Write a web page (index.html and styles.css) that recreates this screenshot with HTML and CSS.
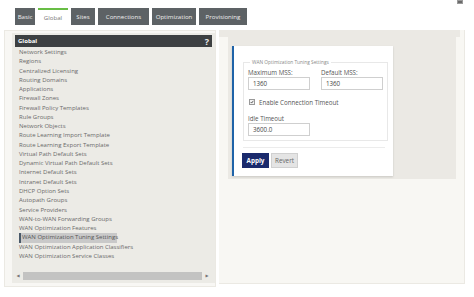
FILE: index.html
```html
<!DOCTYPE html>
<html>
<head>
<meta charset="utf-8">
<link rel="stylesheet" href="styles.css">
</head>
<body>
<div class="corner-icon"></div>
<div class="tabs">
  <div class="tab">Basic</div>
  <div class="tab active">Global</div>
  <div class="tab">Sites</div>
  <div class="tab">Connections</div>
  <div class="tab">Optimization</div>
  <div class="tab">Provisioning</div>
</div>
<div class="main">
  <div class="left">
    <div class="left-inner">
      <div class="left-head"><span>Global</span><span class="help">?</span></div>
      <ul class="nav">
        <li>Network Settings</li>
        <li>Regions</li>
        <li>Centralized Licensing</li>
        <li>Routing Domains</li>
        <li>Applications</li>
        <li>Firewall Zones</li>
        <li>Firewall Policy Templates</li>
        <li>Rule Groups</li>
        <li>Network Objects</li>
        <li>Route Learning Import Template</li>
        <li>Route Learning Export Template</li>
        <li>Virtual Path Default Sets</li>
        <li>Dynamic Virtual Path Default Sets</li>
        <li>Internet Default Sets</li>
        <li>Intranet Default Sets</li>
        <li>DHCP Option Sets</li>
        <li>Autopath Groups</li>
        <li>Service Providers</li>
        <li>WAN-to-WAN Forwarding Groups</li>
        <li>WAN Optimization Features</li>
        <li class="sel">WAN Optimization Tuning Settings</li>
        <li>WAN Optimization Application Classifiers</li>
        <li>WAN Optimization Service Classes</li>
      </ul>
      <div class="hscroll">
        <span class="arr">&#9664;</span>
        <div class="track"></div>
        <span class="arr">&#9654;</span>
      </div>
    </div>
  </div>
  <div class="right">
    <div class="right-top"></div>
    <div class="card-area">
      <div class="card">
        <fieldset class="fs">
          <legend>WAN Optimization Tuning Settings</legend>
          <div class="row">
            <div class="field">
              <label>Maximum MSS:</label>
              <div class="input">1360</div>
            </div>
            <div class="field">
              <label>Default MSS:</label>
              <div class="input">1360</div>
            </div>
          </div>
          <div class="check"><span class="cb"><svg width="6" height="6" viewBox="0 0 6 6"><path d="M1 3 L2.5 4.6 L5 1.2" fill="none" stroke="#333" stroke-width="1.1"/></svg></span>Enable Connection Timeout</div>
          <div class="field">
            <label>Idle Timeout</label>
            <div class="input">3600.0</div>
          </div>
        </fieldset>
        <div class="sep"></div>
        <div class="buttons">
          <div class="btn apply">Apply</div>
          <div class="btn revert">Revert</div>
        </div>
      </div>
    </div>
  </div>
</div>
</body>
</html>
```

FILE: styles.css
```css
* { box-sizing: border-box; }
html, body { margin: 0; padding: 0; background: #ffffff; }
body {
  font-family: "Open Sans", "DejaVu Sans", sans-serif;
  font-size: 6px;
  color: #666;
  width: 474px;
  height: 297px;
  overflow: hidden;
  position: relative;
}
.corner-icon {
  position: absolute;
  left: 457px;
  top: 0;
  width: 6px;
  height: 4px;
  background: #6a6a6a;
  border: 1px solid #999;
}
.tabs {
  display: flex;
  gap: 3px;
  margin: 8px 0 0 15px;
  height: 17px;
}
.tab {
  background: #5d6265;
  color: #eeeeee;
  font-size: 6.1px;
  display: flex;
  align-items: center;
  justify-content: center;
  height: 17px;
}
.tab:nth-child(1) { width: 20px; }
.tab:nth-child(2) { width: 30px; }
.tab:nth-child(3) { width: 24px; }
.tab:nth-child(4) { width: 51px; }
.tab:nth-child(5) { width: 44px; }
.tab:nth-child(6) { width: 48px; }
.tab.active {
  background: #ffffff;
  color: #777;
  border-top: 2px solid #68bd45;
}
.main {
  display: flex;
  margin-top: 5px;
}
.left {
  margin-left: 4px;
  width: 212px;
  height: 257px;
  background: #f8f7f4;
  border: 1px solid #ebe9e3;
  padding: 2px 0 3px 7px;
}
.left-inner {
  background: #ecebe6;
  height: 100%;
  padding: 2px 3px 0 3px;
  display: flex;
  flex-direction: column;
}
.left-head {
  background: #3d4042;
  color: #fff;
  font-weight: bold;
  height: 12px;
  display: flex;
  align-items: center;
  justify-content: space-between;
  padding: 0 3px 0 3px;
  font-size: 6px;
}
.help { font-size: 9px; font-weight: bold; color: #eee; }
.nav {
  list-style: none;
  margin: 1px 0 0 0;
  padding: 0;
}
.nav li {
  height: 9.27px;
  line-height: 9.27px;
  padding-left: 4px;
  color: #6a6a6a;
  white-space: nowrap;
}
.nav li.sel {
  background: #c9c9c9;
  border-left: 2px solid #4a5a6a;
  margin-left: 4px;
  padding-left: 1px;
  width: 98px;
  color: #555;
}
.hscroll {
  margin-top: 10px;
  display: flex;
  align-items: center;
  height: 9px;
  gap: 2px;
}
.hscroll .arr { font-size: 4px; color: #777; width: 6px; text-align: center; }
.hscroll .track { flex: 0 0 179px; height: 8px; background: #c3c3c2; }
.right {
  margin-left: 3px;
  width: 246px;
  height: 254px;
  background: #f8f7f3;
  border-right: 1px solid #ebe9e3;
  border-bottom: 1px solid #ebe9e3;
}
.right-top {
  height: 7px;
  background: #ebe9e4;
  width: 241px;
}
.card-area {
  margin-left: 9px;
  width: 228px;
  height: 142px;
  background: #ebe9e4;
  padding-top: 9px;
  padding-left: 4px;
}
.card {
  width: 161px;
  height: 130px;
  background: #ffffff;
  border-left: 2px solid #1f63a8;
  box-shadow: 0 1px 2px rgba(0,0,0,0.15);
  padding: 13px 8px 0 9px;
}
.fs {
  margin: 0;
  border: 1px solid #e8e8e8;
  padding: 4px 4px 4px 4px;
}
.fs legend {
  font-size: 4.8px;
  color: #888;
  padding: 0 2px;
  margin-left: 2px;
}
.row { display: flex; gap: 11px; }
.field label { display: block; font-size: 6.2px; color: #555; line-height: 8px; }
.input {
  width: 62px;
  height: 13px;
  border: 1px solid #cfcfcf;
  font-size: 6.2px;
  color: #444;
  padding-left: 4px;
  line-height: 11px;
}
.check {
  display: flex;
  align-items: center;
  height: 8px;
  margin: 8px 0 9px 1px;
  font-size: 6.2px;
  color: #555;
}
.cb {
  width: 6px;
  height: 6px;
  border: 1px solid #999;
  margin-right: 4px;
  display: flex;
  align-items: center;
  justify-content: center;
  background: #f4f4f4;
}
.sep {
  border-top: 1px solid #ececec;
  margin: 6px 0 0 0;
}
.buttons {
  display: flex;
  gap: 2px;
  margin: 5px 0 0 -1px;
}
.btn {
  height: 15px;
  display: flex;
  align-items: center;
  justify-content: center;
  font-size: 6.3px;
  width: 27px;
}
.apply { background: #1a2a6c; color: #fff; font-weight: bold; }
.revert { background: #e4e4e4; border: 1px solid #d0d0d0; color: #666; }
```
